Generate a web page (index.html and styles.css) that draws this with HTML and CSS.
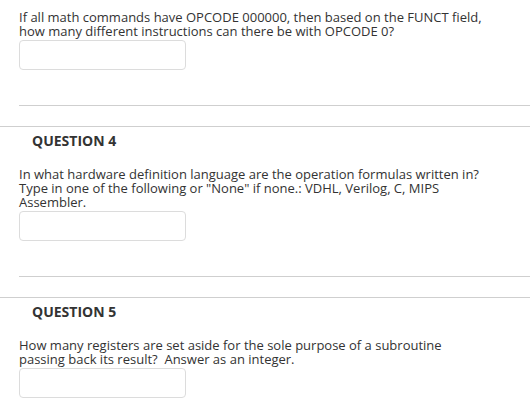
FILE: index.html
```html
<!DOCTYPE html>
<html>
<head>
<meta charset="utf-8">
<link rel="stylesheet" href="styles.css">
</head>
<body>
<div class="page">
  <section class="question first">
    <div class="body">
      <div class="text">If all math commands have OPCODE 000000, then based on the FUNCT field,<br>how many different instructions can there be with OPCODE 0?</div>
      <input class="answer" type="text">
    </div>
  </section>
  <section class="question">
    <h3 class="title">QUESTION 4</h3>
    <div class="body">
      <div class="text">In what hardware definition language are the operation formulas written in?<br>Type in one of the following or "None" if none.: VDHL, Verilog, C, MIPS<br>Assembler.</div>
      <input class="answer" type="text">
    </div>
  </section>
  <section class="question">
    <h3 class="title">QUESTION 5</h3>
    <div class="body">
      <div class="text">How many registers are set aside for the sole purpose of a subroutine<br>passing back its result?&nbsp; Answer as an integer.</div>
      <input class="answer" type="text">
    </div>
  </section>
</div>
</body>
</html>
```
FILE: styles.css
```css
html, body {
  margin: 0;
  padding: 0;
  background: #fff;
}
body {
  font-family: "Open Sans", "Liberation Sans", sans-serif;
  color: #333;
}
.page {
  display: flex;
  flex-direction: column;
  gap: 20px;
}
.question {
  border-top: 1px solid #cfcfcf;
  padding-top: 5px;
}
.question.first {
  border-top: none;
  padding-top: 0;
}
.title {
  margin: 0 0 17px 32px;
  font-size: 14px;
  line-height: 18px;
  font-weight: 700;
  color: #333;
}
.body {
  margin-left: 19px;
  border-bottom: 1px solid #cfcfcf;
  padding-bottom: 35px;
  display: flex;
  flex-direction: column;
  align-items: flex-start;
}
.first .body {
  padding-top: 10px;
}
.text {
  font-size: 13px;
  line-height: 14px;
}
.answer {
  margin: 2px 0 0 0;
  width: 167px;
  height: 30px;
  box-sizing: border-box;
  border: 1px solid #dcdcdc;
  border-radius: 4px;
  background: #fff;
  padding: 0 6px;
  font: inherit;
}
```
